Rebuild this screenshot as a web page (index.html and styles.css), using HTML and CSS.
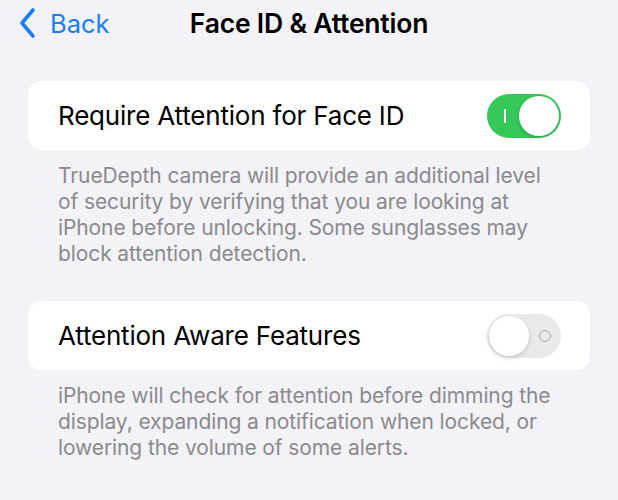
FILE: index.html
```html
<!DOCTYPE html>
<html lang="en">
<head>
    <meta charset="UTF-8">
    <meta name="viewport" content="width=device-width, initial-scale=1.0">
    <title>Face ID &amp; Attention</title>
    <link rel="stylesheet" href="styles.css">
</head>
<body>
    <div class="nav">
        <a class="back" href="#">
            <svg width="18" height="32" viewBox="0 0 18 32"><path d="M15 3 L4 16 L15 29" fill="none" stroke="#1a7ef2" stroke-width="3.6" stroke-linecap="round" stroke-linejoin="round"/></svg>
            <span>Back</span>
        </a>
        <h1>Face ID &amp; Attention</h1>
    </div>
    <div class="group">
        <div class="card">
            <span>Require Attention for Face ID</span>
            <span class="switch on"><i class="mark"></i><b></b></span>
        </div>
        <p class="note">TrueDepth camera will provide an additional level<br>of security by verifying that you are looking at<br>iPhone before unlocking. Some sunglasses may<br>block attention detection.</p>
    </div>
    <div class="group">
        <div class="card">
            <span>Attention Aware Features</span>
            <span class="switch"><b></b><i class="mark"></i></span>
        </div>
        <p class="note">iPhone will check for attention before dimming the<br>display, expanding a notification when locked, or<br>lowering the volume of some alerts.</p>
    </div>
</body>
</html>
```

FILE: styles.css
```css
body {
    margin: 0;
    background: #f2f2f7;
    font-family: Inter, "Noto Sans", sans-serif;
    color: #000;
}
.nav {
    position: relative;
    height: 46px;
    display: flex;
    align-items: center;
    justify-content: center;
}
.nav h1 {
    margin: 0;
    font-size: 26.5px;
    font-weight: 600;
    letter-spacing: -0.2px;
}
.back {
    position: absolute;
    left: 18px;
    top: 7px;
    display: flex;
    align-items: center;
    gap: 14px;
    color: #1a7ef2;
    text-decoration: none;
    font-size: 25.5px;
}
.group {
    margin: 35px 28px 0;
}
.group + .group {
    margin-top: 34px;
}
.card {
    background: #fff;
    border-radius: 14px;
    height: 69px;
    padding: 0 29px 0 30px;
    display: flex;
    align-items: center;
    justify-content: space-between;
    font-size: 26px;
    letter-spacing: -0.2px;
}
.note {
    margin: 13px 30px 0;
    font-size: 21px;
    line-height: 26px;
    color: #8a8a8e;
    letter-spacing: -0.1px;
    white-space: nowrap;
}
.switch {
    width: 74px;
    height: 44px;
    border-radius: 22px;
    background: #e9e9ea;
    display: flex;
    align-items: center;
    justify-content: space-between;
    padding: 0 2px;
    box-sizing: border-box;
}
.switch b {
    width: 40px;
    height: 40px;
    border-radius: 50%;
    background: #fff;
    box-shadow: 0 2px 5px rgba(0, 0, 0, 0.15);
}
.switch .mark {
    width: 10px;
    height: 10px;
    border: 1.5px solid #a4a4a8;
    border-radius: 50%;
    margin-right: 8px;
}
.switch.on {
    background: #34c759;
}
.switch.on .mark {
    width: 2px;
    height: 14px;
    border: 0;
    border-radius: 1px;
    background: #fff;
    margin: 0 0 0 15px;
}
```
